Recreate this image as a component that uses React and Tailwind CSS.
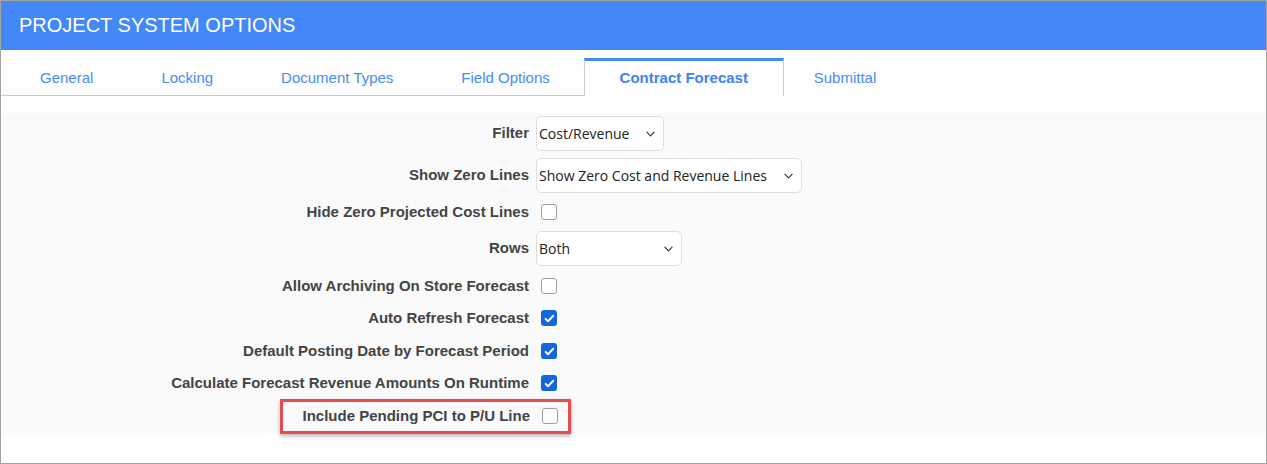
import React from 'react';

const tabs = ['General', 'Locking', 'Document Types', 'Field Options', 'Contract Forecast', 'Submittal'];
const activeTab = 'Contract Forecast';

function Chevron() {
  return (
    <svg viewBox="0 0 10 6" className="w-[9px] h-[6px]" fill="none">
      <path d="M1 1l4 4 4-4" stroke="#333" strokeWidth="1.3" strokeLinecap="round" strokeLinejoin="round" />
    </svg>
  );
}

function Select({ value, width }) {
  return (
    <div
      className={`${width} h-[35px] ml-[7px] bg-white border border-[#dedede] rounded-[5px] flex items-center justify-between pl-[2px] pr-[8px] text-[14px] text-[#222] font-['Open_Sans','Noto_Sans',sans-serif]`}
    >
      <span>{value}</span>
      <Chevron />
    </div>
  );
}

function Checkbox({ checked }) {
  if (checked) {
    return (
      <div className="w-4 h-4 rounded-[3px] bg-[#1266de] flex items-center justify-center">
        <svg viewBox="0 0 16 16" className="w-[13px] h-[13px]" fill="none">
          <path d="M3.2 8.4l3 3 6.4-6.8" stroke="#fff" strokeWidth="2.3" strokeLinecap="round" strokeLinejoin="round" />
        </svg>
      </div>
    );
  }
  return <div className="w-4 h-4 rounded-[3px] border border-[#9c9ca6] bg-white" />;
}

function Label({ children }) {
  return <div className="w-[528px] text-right font-bold text-[15px] text-[#444]">{children}</div>;
}

function CheckRow({ label, checked, className = '' }) {
  return (
    <div className={`h-[32px] flex items-center ${className}`}>
      <Label>{label}</Label>
      <div className="ml-[12px]">
        <Checkbox checked={checked} />
      </div>
    </div>
  );
}

export default function App() {
  const activeIndex = tabs.indexOf(activeTab);

  return (
    <div className="w-[1267px] h-[464px] border border-[#a3a3a3] bg-white flex flex-col font-['Liberation_Sans',Arial,sans-serif]">
      {/* header */}
      <div className="h-[49px] shrink-0 bg-[#4388f6] flex items-center pl-[18px] pb-[2px] text-white text-[20px]">
        PROJECT SYSTEM OPTIONS
      </div>

      {/* tabs */}
      <div className="h-[46px] shrink-0 flex items-end bg-[#fdfdfd]">
        <div className="h-[38px] w-[5px] border-b border-[#c5cdd8]" />
        {tabs.map((t, i) => {
          if (t === activeTab) {
            return (
              <div
                key={t}
                className="h-[38px] w-[200px] border-t-[3px] border-t-[#4388f6] border-x border-x-[#c5cdd8] flex items-center justify-center font-bold text-[15px] text-[#3f84ef]"
              >
                {t}
              </div>
            );
          }
          return (
            <div
              key={t}
              className={`h-[38px] pt-[3px] flex items-center text-[15px] text-[#4a8cf2] ${
                i < activeIndex ? 'px-[34px] border-b border-[#c5cdd8]' : 'pl-[30px] pr-[34px]'
              }`}
            >
              {t}
            </div>
          );
        })}
      </div>

      <div className="h-[17px] shrink-0" />

      {/* form */}
      <div className="h-[320px] shrink-0 bg-[#fafafa] pt-[3px] flex flex-col">
        <div className="h-[35px] flex items-center">
          <Label>Filter</Label>
          <Select value="Cost/Revenue" width="w-[128px]" />
        </div>
        <div className="h-[35px] mt-[7px] flex items-center">
          <Label>Show Zero Lines</Label>
          <Select value="Show Zero Cost and Revenue Lines" width="w-[266px]" />
        </div>
        <CheckRow label="Hide Zero Projected Cost Lines" className="mt-[3px]" />
        <div className="h-[35px] mt-[3px] flex items-center">
          <Label>Rows</Label>
          <Select value="Both" width="w-[146px]" />
        </div>
        <CheckRow label="Allow Archiving On Store Forecast" className="mt-[4px]" />
        <CheckRow label="Auto Refresh Forecast" checked />
        <CheckRow label="Default Posting Date by Forecast Period" checked className="mt-[1px]" />
        <CheckRow label="Calculate Forecast Revenue Amounts On Runtime" checked />
        <div className="flex items-center h-[34px]">
          <div className="w-[279px]" />
          <div className="w-[291px] h-[35px] border-[3px] border-[#ea4b4f] shadow-[0_2px_4px_rgba(0,0,0,0.3)] flex items-center justify-end pr-[10px]">
            <span className="font-bold text-[15px] text-[#444]">Include Pending PCI to P/U Line</span>
            <div className="ml-[12px]">
              <Checkbox />
            </div>
          </div>
        </div>
      </div>
    </div>
  );
}
